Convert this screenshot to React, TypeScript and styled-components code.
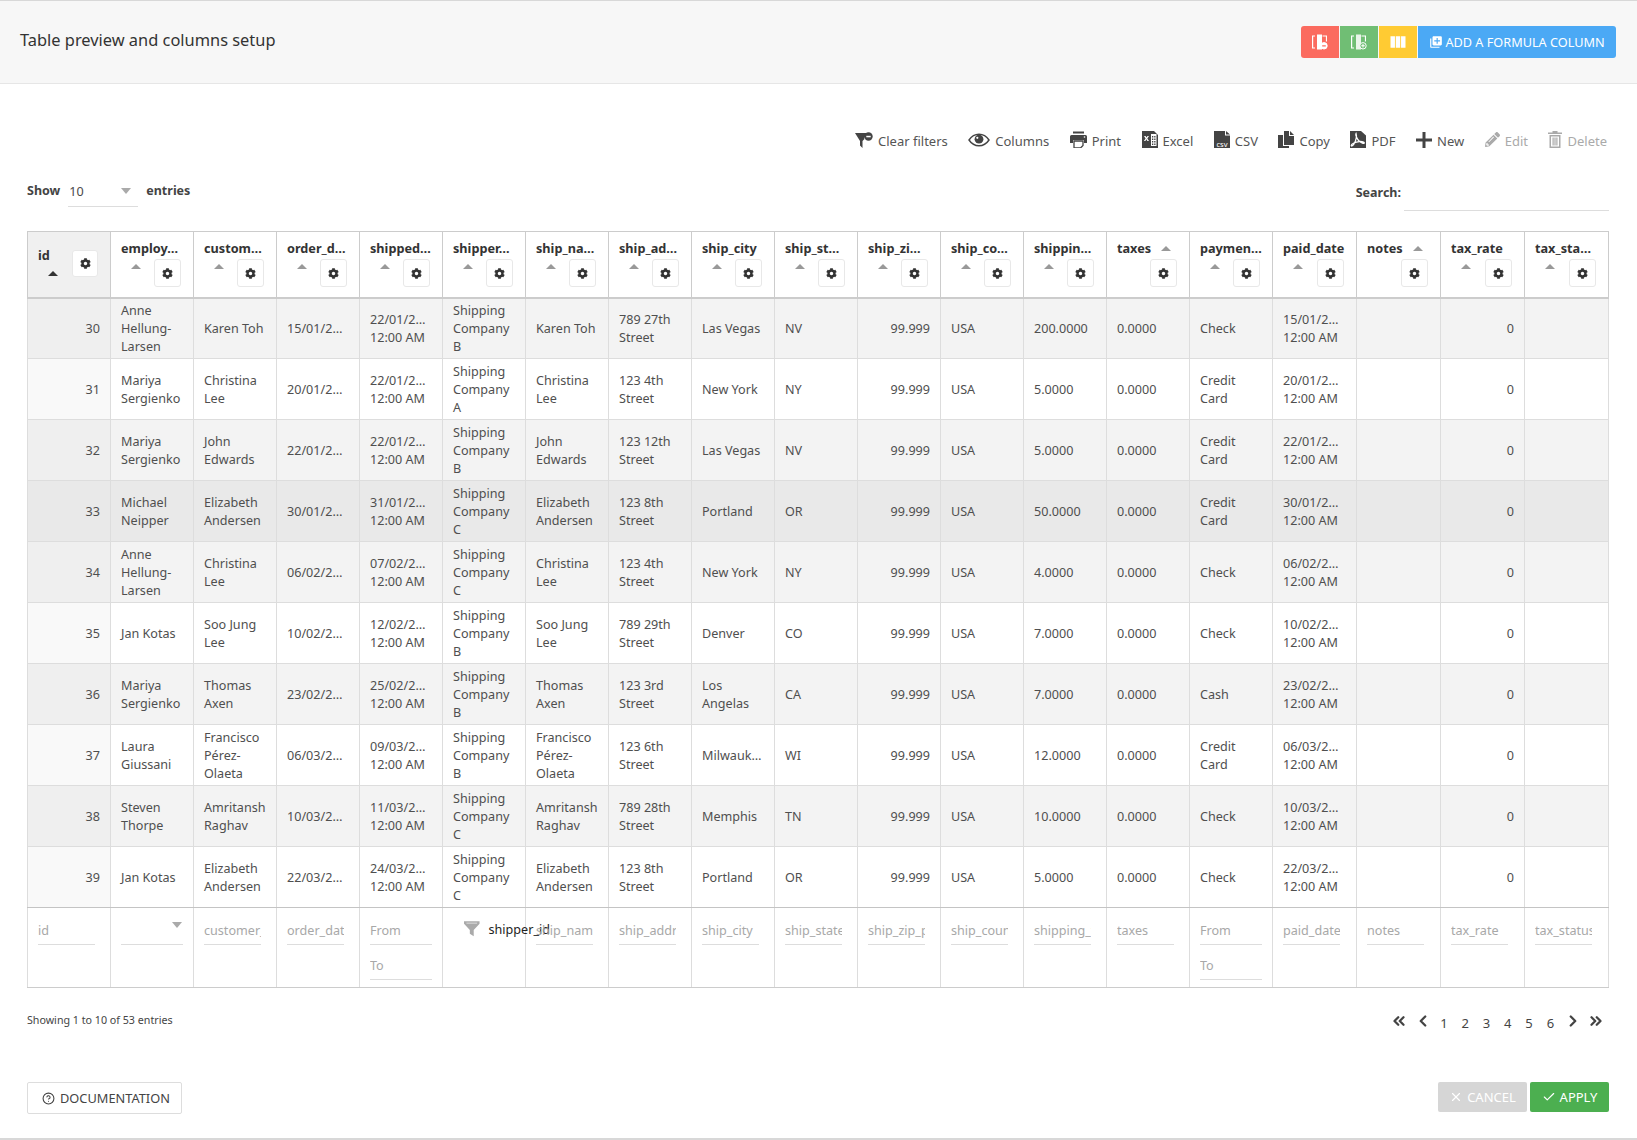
import React from 'react';
import styled, { createGlobalStyle } from 'styled-components';
import { FaCog, FaPencilAlt } from 'react-icons/fa';
import { MdLibraryAdd, MdViewColumn } from 'react-icons/md';
import { Check, ChevronLeft, ChevronRight, ChevronsLeft, ChevronsRight, CircleHelp, X } from 'lucide-react';

const FONT = '"Noto Sans", "Open Sans", sans-serif';

const GlobalStyle = createGlobalStyle`
  html, body { margin: 0; padding: 0; background: #fff; }
  body { font-family: ${FONT}; font-size: 13px; color: #4a4a4a; }
  * { box-sizing: border-box; }
`;

const Page = styled.div`
  width: 1637px;
  height: 1140px;
  border-top: 1px solid #d8d8d8;
  border-bottom: 2px solid #d8d8d8;
  display: flex;
  flex-direction: column;
`;

const Header = styled.header`
  height: 83px;
  flex: none;
  background: #f7f7f7;
  border-bottom: 1px solid #e6e6e6;
  display: flex;
  align-items: flex-start;
  justify-content: space-between;
  padding: 0 21px 0 20px;
`;

const Title = styled.h1`
  margin: 27px 0 0;
  font-size: 16.4px;
  line-height: 24px;
  font-weight: 400;
  color: #333;
`;

const HeaderActions = styled.div`
  display: flex;
  gap: 1px;
  margin-top: 25px;
`;

const ActionButton = styled.button<{ $bg: string; $wide?: boolean }>`
  height: 32px;
  width: ${({ $wide }) => ($wide ? '198px' : '38px')};
  border: 0;
  padding: 0;
  background: ${({ $bg }) => $bg};
  color: #fff;
  font-family: ${FONT};
  font-size: 12.7px;
  display: flex;
  align-items: center;
  justify-content: center;
  gap: 2px;
  white-space: nowrap;
  &:first-child { border-radius: 3px 0 0 3px; }
  &:last-child { border-radius: 0 3px 3px 0; }
`;

const Body = styled.main`
  flex: 1;
  padding: 0 28px 0 27px;
  display: flex;
  flex-direction: column;
`;

const Toolbar = styled.div`
  display: flex;
  justify-content: flex-end;
  gap: 20.5px;
  margin-top: 45px;
  padding-right: 2px;
  height: 24px;
`;

const ToolButton = styled.span<{ $off?: boolean }>`
  display: inline-flex;
  align-items: center;
  gap: 5px;
  font-size: 13px;
  color: ${({ $off }) => ($off ? '#aaa' : '#555')};
  svg { flex: none; margin-top: -3px; color: ${({ $off }) => ($off ? '#aaa' : '#444')}; }
`;

const FilterBar = styled.div`
  display: flex;
  justify-content: space-between;
  align-items: flex-start;
  margin-top: 29px;
  height: 49px;
`;

const Strong = styled.span`
  font-weight: 700;
  font-size: 12.5px;
  color: #444;
`;

const LengthGroup = styled.div`
  display: flex;
  align-items: flex-start;
  gap: 8px;
  line-height: 18px;
`;

const LengthSelect = styled.div`
  width: 70px;
  height: 25px;
  border-bottom: 1px solid #ddd;
  padding: 1px 7px 0 1px;
  display: flex;
  justify-content: space-between;
  font-size: 12.6px;
`;

const Caret = styled.i`
  display: block;
  width: 0;
  height: 0;
  margin-top: 5px;
  border-left: 5px solid transparent;
  border-right: 5px solid transparent;
  border-top: 6px solid #aaa;
`;

const SearchGroup = styled.div`
  display: flex;
  gap: 3px;
  margin-top: 2px;
  line-height: 18px;
`;

const SearchInput = styled.input`
  width: 205px;
  height: 27px;
  border: 0;
  border-bottom: 1px solid #ddd;
  outline: 0;
  background: transparent;
`;

const Grid = styled.table`
  width: 1582px;
  table-layout: fixed;
  border-collapse: collapse;
  border: 1px solid #ccc;
  tbody tr:nth-last-child(2) td { border-bottom-color: #c4c4c4; }
`;

const Th = styled.th<{ $sorted?: boolean }>`
  height: 66px;
  padding: 7px 12px 0 10px;
  vertical-align: top;
  text-align: left;
  border: 1px solid #ccc;
  border-bottom: 2px solid #ccc;
  background: ${({ $sorted }) => ($sorted ? '#f0f0f0' : '#fff')};
`;

const HeadInner = styled.div<{ $column?: boolean }>`
  display: flex;
  flex-wrap: wrap;
  align-items: flex-start;
  position: relative;
  ${({ $column }) => ($column ? 'padding-top: 7px;' : '')}
`;

const HeadLabel = styled.span<{ $full?: boolean }>`
  font-size: 12.7px;
  line-height: 18px;
  font-weight: 700;
  color: #333;
  white-space: nowrap;
  ${({ $full }) => ($full ? 'width: 100%;' : '')}
`;

const SortArrow = styled.i<{ $active?: boolean }>`
  display: block;
  width: 0;
  height: 0;
  margin: 7px 0 0 10px;
  border-left: 5px solid transparent;
  border-right: 5px solid transparent;
  border-bottom: 5px solid ${({ $active }) => ($active ? '#333' : '#999')};
`;

const GearButton = styled.button`
  width: 27px;
  height: 28px;
  margin: 2px 0 0 auto;
  padding: 0;
  background: #fff;
  border: 1px solid #e8e8e8;
  border-radius: 3px;
  color: #333;
  display: flex;
  align-items: center;
  justify-content: center;
`;

const IdGear = styled(GearButton)`
  position: absolute;
  top: 11px;
  right: 0;
  width: 26px;
  height: 27px;
  margin: 0;
`;

const Td = styled.td<{ $right?: boolean; $bg: string }>`
  height: 61px;
  padding: 1px 10px 0;
  border: 1px solid #ddd;
  font-size: 12.6px;
  line-height: 18px;
  color: #4f4f4f;
  white-space: pre-line;
  overflow: hidden;
  text-align: ${({ $right }) => ($right ? 'right' : 'left')};
  background: ${({ $bg }) => $bg};
`;

const FilterCell = styled.td`
  height: 80px;
  padding: 9px 10px 0;
  vertical-align: top;
  border: 1px solid #ddd;
  border-top: 1px solid #ccc;
  border-bottom: 1px solid #ccc;
`;

const FilterInput = styled.input<{ $wide?: boolean }>`
  display: block;
  width: ${({ $wide }) => ($wide ? '62px' : '57px')};
  height: 28px;
  margin-bottom: 7px;
  padding: 0;
  border: 0;
  border-bottom: 1px solid #ddd;
  outline: 0;
  background: transparent;
  font-family: ${FONT};
  font-size: 12.6px;
  &::placeholder { color: #a8a8a8; opacity: 1; }
`;

const FilterSelect = styled.div`
  width: 62px;
  height: 28px;
  border-bottom: 1px solid #ddd;
  display: flex;
  justify-content: flex-end;
  padding-right: 1px;
`;

const OverflowFilter = styled.div`
  display: flex;
  align-items: flex-start;
  gap: 9px;
  margin: 4px 0 0 11px;
  width: 86px;
  height: 20px;
  font-size: 12.6px;
  color: #222;
  white-space: nowrap;
  line-height: 18px;
`;

const Footer = styled.div`
  display: flex;
  justify-content: space-between;
  align-items: flex-start;
  margin-top: 23px;
  height: 71px;
`;

const Info = styled.span`
  font-size: 10.7px;
  line-height: 18px;
  color: #444;
`;

const Pager = styled.nav`
  display: flex;
  align-items: center;
  margin: 0 4px 0 0;
  height: 20px;
  color: #444;
  font-size: 13px;
`;

const PagerNumber = styled.span`
  width: 21.3px;
  text-align: center;
  padding-top: 3px;
`;

const PagerIcon = styled.span<{ $gap?: number; $after?: number }>`
  display: flex;
  margin-left: ${({ $gap }) => $gap ?? 0}px;
  margin-right: ${({ $after }) => $after ?? 0}px;
`;

const ActionBar = styled.div`
  display: flex;
  align-items: flex-start;
  justify-content: space-between;
`;

const DocButton = styled.button`
  width: 155px;
  height: 32px;
  border: 1px solid #ddd;
  border-radius: 2px;
  background: #fff;
  color: #444;
  font-family: ${FONT};
  font-size: 12.8px;
  display: flex;
  align-items: center;
  padding: 0 0 0 14px;
  gap: 5px;
`;

const ButtonGroup = styled.div`
  display: flex;
  gap: 3px;
`;

const FlatButton = styled.button<{ $bg: string; $width: number }>`
  width: ${({ $width }) => $width}px;
  height: 30px;
  border: 0;
  border-radius: 2px;
  background: ${({ $bg }) => $bg};
  color: #fff;
  font-family: ${FONT};
  font-size: 13px;
  display: flex;
  align-items: center;
  justify-content: center;
  gap: 4px;
`;

// drawn icons, the icon set of the original has no match in the packages
const Ico = ({ w = 18, h = 18, box = '0 0 18 18', children }: { w?: number; h?: number; box?: string; children: React.ReactNode }) => (
  <svg width={w} height={h} viewBox={box} fill="currentColor">{children}</svg>
);

const ClearFilterIcon = () => (
  <Ico w={18} h={19} box="0 0 18 19">
    <path d="M0 3h13l-1.200 2.200A5.500 5.500 0 0 0 9 10v-.5l-1.500 1.600V18L5 15.500v-4.600z" />
    <circle cx="13.500" cy="6.500" r="4.200" />
    <rect x="11.300" y="5.800" width="4.400" height="1.500" fill="#fff" />
  </Ico>
);

const EyeIcon = () => (
  <Ico w={22} h={14} box="0 0 22 14">
    <path d="M1 7c2.600-3.900 6-5.800 10-5.800S18.400 3.100 21 7c-2.600 3.900-6 5.800-10 5.800S3.600 10.900 1 7z" fill="none" stroke="currentColor" strokeWidth="1.400" />
    <circle cx="11" cy="6.200" r="4.400" />
    <circle cx="9.300" cy="4.800" r="1.100" fill="#fff" />
  </Ico>
);

const PrintIcon = () => (
  <Ico w={17} h={17} box="0 0 17 17">
    <rect x="3" y="0.500" width="11" height="2" />
    <path d="M1.500 4h14A1.500 1.500 0 0 1 17 5.500V12h-3V9H3v3H0V5.500A1.500 1.500 0 0 1 1.500 4z" />
    <path d="M4 10h9v4.500L10.500 17H4z" fill="none" stroke="currentColor" strokeWidth="1.300" />
    <circle cx="14.500" cy="6" r=".8" fill="#fff" />
  </Ico>
);

const ExcelIcon = () => (
  <Ico w={16} h={17} box="0 0 16 17">
    <path d="M0 0h12l4 4v13H0z" />
    <path d="M2 5h1.600l.9 1.600L5.500 5h1.500L5.300 7.400 7 10H5.400l-1-1.700L3.400 10H1.900l1.700-2.600z" fill="#fff" />
    <path d="M9 3h5.500v12H9zM10 5v1.500h1.300V5zM12.200 5v1.500h1.300V5zM10 7.500V9h1.300V7.500zM12.200 7.500V9h1.300V7.500zM10 10v1.500h1.300V10zM12.200 10v1.500h1.300V10zM10 12.500V14h1.300v-1.500zM12.200 12.500V14h1.300v-1.500z" fill="#fff" fillRule="evenodd" />
  </Ico>
);

const CsvIcon = () => (
  <Ico w={16} h={17} box="0 0 16 17">
    <path d="M0 0h11v4.500h5V11H0zM12 0l4 3.500h-4z" />
    <path d="M0 11h16v6H0z" />
    <text x="8" y="15.500" fontSize="7.500" textAnchor="middle" fill="#fff" fontFamily="Noto Sans, sans-serif">csv</text>
  </Ico>
);

const CopyIcon = () => (
  <Ico w={16} h={17} box="0 0 16 17">
    <path d="M6 0h5v5h5v9H6zM12 0l4 4h-4z" />
    <path d="M0 4h5v11h6v2H0z" />
  </Ico>
);

const PdfIcon = () => (
  <Ico w={16} h={17} box="0 0 16 17">
    <path d="M0 0h11l5 4.500V17H0z" />
    <path d="M6 2.500c1 3 .5 6-2 10.500-1.500 2.500-3 2.400-2.700 1.200.4-1.400 4-3.200 8-3.600 3-.3 5.200.4 5 1.300-.2 1-3 .5-5.300-2C7.500 8.500 5 4 6 2.500z" fill="none" stroke="#fff" strokeWidth="1.300" />
  </Ico>
);

const PlusIcon = () => (
  <Ico w={16} h={16} box="0 0 16 16">
    <path d="M6.500 0h3v6.500H16v3H9.500V16h-3V9.500H0v-3h6.500z" />
  </Ico>
);

const TrashIcon = () => (
  <Ico w={14} h={17} box="0 0 14 17">
    <path d="M4.500 0h5v1.500H14V3H0V1.500h4.500zM1.500 4h11v13h-11zM3 5.500v10h8v-10z" fillRule="evenodd" />
    <path d="M4.500 6.500h1.200v8H4.500zM6.400 6.500h1.200v8H6.400zM8.300 6.500h1.200v8H8.300z" />
  </Ico>
);

const ColumnBadgeIcon = ({ sign }: { sign: 'minus' | 'plus' }) => (
  <Ico w={16} h={16} box="0 0 16 16">
    <path d="M0 1.500h3v1.100H1.200v10.800H3v1.100H0zM10.500 1.500H15v6h-1.100V2.600h-3.400z" />
    <rect x="5" y="0.500" width="5" height="15" opacity={sign === 'plus' ? 0.85 : 1} />
    <circle cx="12" cy="11.800" r="3.200" stroke="currentColor" strokeWidth="1" fill={sign === 'minus' ? '#fff' : '#70be74'} />
    <path d={sign === 'minus' ? 'M10.200 11.300h3.600v1.100h-3.600z' : 'M11.500 10h1v1.300h1.300v1h-1.300v1.300h-1v-1.300h-1.300v-1h1.300z'} fill={sign === 'minus' ? '#fb6b5f' : '#fff'} />
  </Ico>
);

const FunnelIcon = () => (
  <Ico w={16} h={16} box="0 0 16 16">
    <path d="M0 0h16v2.500L10 9v6.500L6 13V9L0 2.500z" fill="#aaa" />
    <path d="M2.500 2h11" stroke="#ddd" strokeWidth="1" />
  </Ico>
);

const columns = [
  'id', 'employ…', 'custom…', 'order_d…', 'shipped…', 'shipper…', 'ship_na…', 'ship_ad…', 'ship_city', 'ship_st…',
  'ship_zi…', 'ship_co…', 'shippin…', 'taxes', 'paymen…', 'paid_date', 'notes', 'tax_rate', 'tax_sta…',
];

const filters: (string | string[] | null)[] = [
  'id', null, 'customer_id', 'order_date', ['From', 'To'], null, 'ship_name', 'ship_address', 'ship_city', 'ship_state_province',
  'ship_zip_postal_code', 'ship_country_region', 'shipping_fee', 'taxes', ['From', 'To'], 'paid_date', 'notes', 'tax_rate', 'tax_status_id',
];

const t = (d: string) => `${d}…\n12:00 AM`;

const rows = [
  [30, 'Anne Hellung-Larsen', 'Karen Toh', '15/01/2…', t('22/01/2'), 'B', '789 27th Street', 'Las Vegas', 'NV', '200.0000', 'Check', t('15/01/2')],
  [31, 'Mariya Sergienko', 'Christina Lee', '20/01/2…', t('22/01/2'), 'A', '123 4th Street', 'New York', 'NY', '5.0000', 'Credit Card', t('20/01/2')],
  [32, 'Mariya Sergienko', 'John Edwards', '22/01/2…', t('22/01/2'), 'B', '123 12th Street', 'Las Vegas', 'NV', '5.0000', 'Credit Card', t('22/01/2')],
  [33, 'Michael Neipper', 'Elizabeth Andersen', '30/01/2…', t('31/01/2'), 'C', '123 8th Street', 'Portland', 'OR', '50.0000', 'Credit Card', t('30/01/2')],
  [34, 'Anne Hellung-Larsen', 'Christina Lee', '06/02/2…', t('07/02/2'), 'C', '123 4th Street', 'New York', 'NY', '4.0000', 'Check', t('06/02/2')],
  [35, 'Jan Kotas', 'Soo Jung Lee', '10/02/2…', t('12/02/2'), 'B', '789 29th Street', 'Denver', 'CO', '7.0000', 'Check', t('10/02/2')],
  [36, 'Mariya Sergienko', 'Thomas Axen', '23/02/2…', t('25/02/2'), 'B', '123 3rd Street', 'Los Angelas', 'CA', '7.0000', 'Cash', t('23/02/2')],
  [37, 'Laura Giussani', 'Francisco Pérez-Olaeta', '06/03/2…', t('09/03/2'), 'B', '123 6th Street', 'Milwauk…', 'WI', '12.0000', 'Credit Card', t('06/03/2')],
  [38, 'Steven Thorpe', 'Amritansh Raghav', '10/03/2…', t('11/03/2'), 'C', '789 28th Street', 'Memphis', 'TN', '10.0000', 'Check', t('10/03/2')],
  [39, 'Jan Kotas', 'Elizabeth Andersen', '22/03/2…', t('24/03/2'), 'C', '123 8th Street', 'Portland', 'OR', '5.0000', 'Check', t('22/03/2')],
] as const;

const rowBg = (i: number, first: boolean) => {
  if (i === 3) return '#e9e9e9';
  if (i % 2 === 0) return first ? '#efefef' : '#f3f3f3';
  return first ? '#f9f9f9' : '#fff';
};

export default function App() {
  return (
    <Page>
      <GlobalStyle />
      <Header>
        <Title>Table preview and columns setup</Title>
        <HeaderActions>
          <ActionButton $bg="#fb6b5f"><ColumnBadgeIcon sign="minus" /></ActionButton>
          <ActionButton $bg="#70be74"><ColumnBadgeIcon sign="plus" /></ActionButton>
          <ActionButton $bg="#ffcb33"><MdViewColumn size={20} /></ActionButton>
          <ActionButton $bg="#4ba9f5" $wide><MdLibraryAdd size={14} />ADD A FORMULA COLUMN</ActionButton>
        </HeaderActions>
      </Header>
      <Body>
        <Toolbar>
          <ToolButton><ClearFilterIcon />Clear filters</ToolButton>
          <ToolButton><EyeIcon />Columns</ToolButton>
          <ToolButton><PrintIcon />Print</ToolButton>
          <ToolButton><ExcelIcon />Excel</ToolButton>
          <ToolButton><CsvIcon />CSV</ToolButton>
          <ToolButton><CopyIcon />Copy</ToolButton>
          <ToolButton><PdfIcon />PDF</ToolButton>
          <ToolButton><PlusIcon />New</ToolButton>
          <ToolButton $off><FaPencilAlt size={15} />Edit</ToolButton>
          <ToolButton $off><TrashIcon />Delete</ToolButton>
        </Toolbar>
        <FilterBar>
          <LengthGroup>
            <Strong>Show</Strong>
            <LengthSelect>10<Caret /></LengthSelect>
            <Strong>entries</Strong>
          </LengthGroup>
          <SearchGroup>
            <Strong>Search:</Strong>
            <SearchInput />
          </SearchGroup>
        </FilterBar>
        <Grid>
          <colgroup>
            {columns.map((c, i) => <col key={c} width={i < 15 ? 83 : 84} />)}
          </colgroup>
          <thead>
            <tr>
              {columns.map((c, i) => (
                <Th key={c} $sorted={i === 0}>
                  <HeadInner $column={i === 0}>
                    <HeadLabel $full={i === 0}>{c}</HeadLabel>
                    <SortArrow $active={i === 0} />
                    {i === 0 ? <IdGear><FaCog size={11} /></IdGear> : <GearButton><FaCog size={11} /></GearButton>}
                  </HeadInner>
                </Th>
              ))}
            </tr>
          </thead>
          <tbody>
            {rows.map((r, i) => (
              <tr key={r[0]}>
                <Td $right $bg={rowBg(i, true)}>{r[0]}</Td>
                <Td $bg={rowBg(i, false)}>{r[1]}</Td>
                <Td $bg={rowBg(i, false)}>{r[2]}</Td>
                <Td $bg={rowBg(i, false)}>{r[3]}</Td>
                <Td $bg={rowBg(i, false)}>{r[4]}</Td>
                <Td $bg={rowBg(i, false)}>{`Shipping Company ${r[5]}`}</Td>
                <Td $bg={rowBg(i, false)}>{r[2]}</Td>
                <Td $bg={rowBg(i, false)}>{r[6]}</Td>
                <Td $bg={rowBg(i, false)}>{r[7]}</Td>
                <Td $bg={rowBg(i, false)}>{r[8]}</Td>
                <Td $right $bg={rowBg(i, false)}>99.999</Td>
                <Td $bg={rowBg(i, false)}>USA</Td>
                <Td $bg={rowBg(i, false)}>{r[9]}</Td>
                <Td $bg={rowBg(i, false)}>0.0000</Td>
                <Td $bg={rowBg(i, false)}>{r[10]}</Td>
                <Td $bg={rowBg(i, false)}>{r[11]}</Td>
                <Td $bg={rowBg(i, false)} />
                <Td $right $bg={rowBg(i, false)}>0</Td>
                <Td $bg={rowBg(i, false)} />
              </tr>
            ))}
            <tr>
              {filters.map((f, i) => (
                <FilterCell key={i}>
                  {i === 1 && <FilterSelect><Caret /></FilterSelect>}
                  {i === 5 && <OverflowFilter><FunnelIcon />shipper_id</OverflowFilter>}
                  {typeof f === 'string' && <FilterInput placeholder={f} />}
                  {Array.isArray(f) && f.map((p) => <FilterInput key={p} $wide placeholder={p} />)}
                </FilterCell>
              ))}
            </tr>
          </tbody>
        </Grid>
        <Footer>
          <Info>Showing 1 to 10 of 53 entries</Info>
          <Pager>
            <ChevronsLeft size={18} strokeWidth={3} />
            <PagerIcon $gap={6} $after={1}><ChevronLeft size={18} strokeWidth={3} /></PagerIcon>
            {[1, 2, 3, 4, 5, 6].map((n) => <PagerNumber key={n}>{n}</PagerNumber>)}
            <PagerIcon $gap={3}><ChevronRight size={18} strokeWidth={3} /></PagerIcon>
            <PagerIcon $gap={5}><ChevronsRight size={18} strokeWidth={3} /></PagerIcon>
          </Pager>
        </Footer>
        <ActionBar>
          <DocButton><CircleHelp size={13} />DOCUMENTATION</DocButton>
          <ButtonGroup>
            <FlatButton $bg="#d6d6d6" $width={89}><X size={14} />CANCEL</FlatButton>
            <FlatButton $bg="#4caf50" $width={79}><Check size={14} />APPLY</FlatButton>
          </ButtonGroup>
        </ActionBar>
      </Body>
    </Page>
  );
}
